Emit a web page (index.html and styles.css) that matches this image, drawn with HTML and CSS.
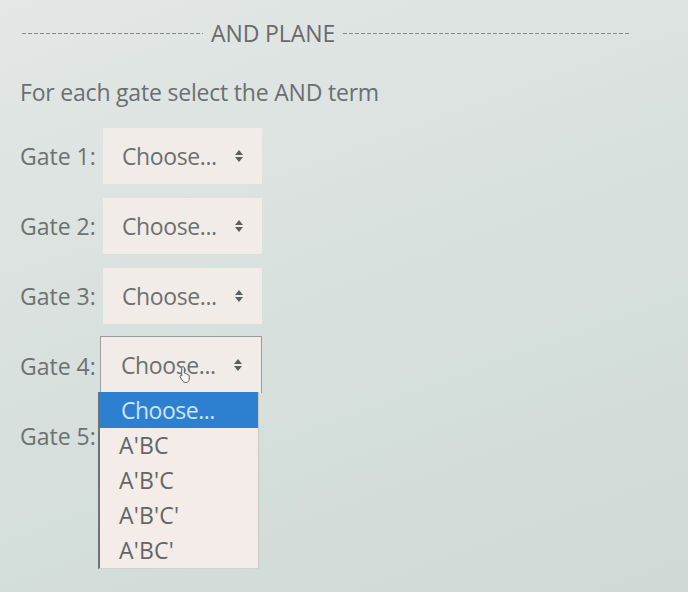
FILE: index.html
```html
<!DOCTYPE html>
<html>
<head>
<meta charset="utf-8">
<link rel="stylesheet" href="styles.css">
</head>
<body>
<div class="page">
  <div class="header">
    <span class="dashes left"></span>
    <span class="title">AND PLANE</span>
    <span class="dashes right"></span>
  </div>
  <p class="intro">For each gate select the AND term</p>
  <div class="rows">
    <div class="row">
      <span class="label">Gate 1:</span>
      <div class="select"><span class="value">Choose...</span><span class="arrows"><i class="up"></i><i class="down"></i></span></div>
    </div>
    <div class="row">
      <span class="label">Gate 2:</span>
      <div class="select"><span class="value">Choose...</span><span class="arrows"><i class="up"></i><i class="down"></i></span></div>
    </div>
    <div class="row">
      <span class="label">Gate 3:</span>
      <div class="select"><span class="value">Choose...</span><span class="arrows"><i class="up"></i><i class="down"></i></span></div>
    </div>
    <div class="row">
      <span class="label">Gate 4:</span>
      <div class="select focused">
        <span class="value">Choose...</span><span class="arrows"><i class="up"></i><i class="down"></i></span>
        <svg class="cursor" width="14" height="18" viewBox="0 0 14 18"><path d="M4 1.5c.8 0 1.3.6 1.3 1.3v5.2l.5-.1c.7 0 1.1.4 1.2 1l.4-.1c.7 0 1.1.5 1.2 1l.4-.1c.7 0 1.2.6 1.2 1.2v3.3c0 1.8-1.3 3.3-3.2 3.3H6.3c-1 0-1.9-.5-2.5-1.4L1.2 12c-.4-.6-.2-1.3.4-1.6.5-.3 1.1-.2 1.5.3l-.4.1V2.8c0-.7.5-1.3 1.3-1.3z" fill="#f6f6f6" stroke="#5b5f60" stroke-width="1"/></svg>
        <ul class="dropdown">
          <li class="selected">Choose...</li>
          <li>A'BC</li>
          <li>A'B'C</li>
          <li>A'B'C'</li>
          <li>A'BC'</li>
        </ul>
      </div>
    </div>
    <div class="row">
      <span class="label">Gate 5:</span>
      <div class="select hidden"></div>
    </div>
  </div>
</div>
</body>
</html>
```

FILE: styles.css
```css
html, body {
  margin: 0;
  padding: 0;
}
body {
  width: 688px;
  height: 592px;
  overflow: hidden;
  background: linear-gradient(160deg, #e3e7e6 0%, #dce3e1 30%, #d4dedb 65%, #d0d9d5 100%);
  font-family: "Open Sans", "Noto Sans", sans-serif;
  color: #6c7070;
}
.page {
  padding: 18px 0 0 22px;
}
.header {
  display: flex;
  align-items: center;
  height: 30px;
  gap: 8px;
}
.dashes {
  height: 1px;
  background: repeating-linear-gradient(90deg, #858a8a 0 4px, transparent 4px 6px);
}
.dashes.left { width: 181px; }
.dashes.right { width: 287px; }
.title {
  font-size: 23px;
  color: #676b6b;
  letter-spacing: -0.1px;
}
.intro {
  margin: 29px 0 0 -2px;
  font-size: 23px;
  line-height: 30px;
  letter-spacing: -0.2px;
  color: #6b6f6f;
}
.rows {
  margin-top: 21px;
  display: flex;
  flex-direction: column;
  gap: 14px;
  margin-left: -2px;
}
.row {
  display: flex;
  align-items: center;
  height: 56px;
}
.label {
  width: 83px;
  font-size: 23px;
  letter-spacing: 0;
  color: #6d7171;
}
.select {
  position: relative;
  width: 159px;
  height: 56px;
  box-sizing: border-box;
  background: #f2ece9;
  display: flex;
  align-items: center;
  padding-left: 19px;
}
.select.hidden {
  visibility: hidden;
}
.value {
  font-size: 23px;
  letter-spacing: -0.4px;
  color: #6d7070;
  width: 113px;
  white-space: nowrap;
}
.arrows {
  display: flex;
  flex-direction: column;
  gap: 2px;
}
.arrows i {
  display: block;
  width: 0;
  height: 0;
  border-left: 4px solid transparent;
  border-right: 4px solid transparent;
}
.arrows .up { border-bottom: 5px solid #5a5e5e; }
.arrows .down { border-top: 5px solid #5a5e5e; }
.select.focused {
  margin-left: -3px;
  margin-top: -3px;
  width: 162px;
  height: 57px;
  border: 1.5px solid #9a9d9c;
  border-bottom: none;
  padding-left: 20px;
  z-index: 2;
}
.cursor {
  position: absolute;
  left: 78px;
  top: 28px;
}
.dropdown {
  position: absolute;
  left: -3px;
  top: 55px;
  width: 161px;
  margin: 0;
  padding: 0;
  list-style: none;
  background: #f3ece9;
  border-left: 2px solid #6e7272;
  border-right: 1px solid #c9c6c4;
  border-bottom: 1px solid #d6d2cf;
  box-sizing: border-box;
}
.dropdown li {
  height: 35px;
  line-height: 35px;
  padding-left: 19px;
  font-size: 23px;
  letter-spacing: 0.2px;
  color: #626666;
}
.dropdown li.selected {
  height: 36px;
  line-height: 36px;
  background: #2d80d0;
  color: #cfe5f6;
  padding-left: 21px;
  letter-spacing: -0.5px;
}
```
